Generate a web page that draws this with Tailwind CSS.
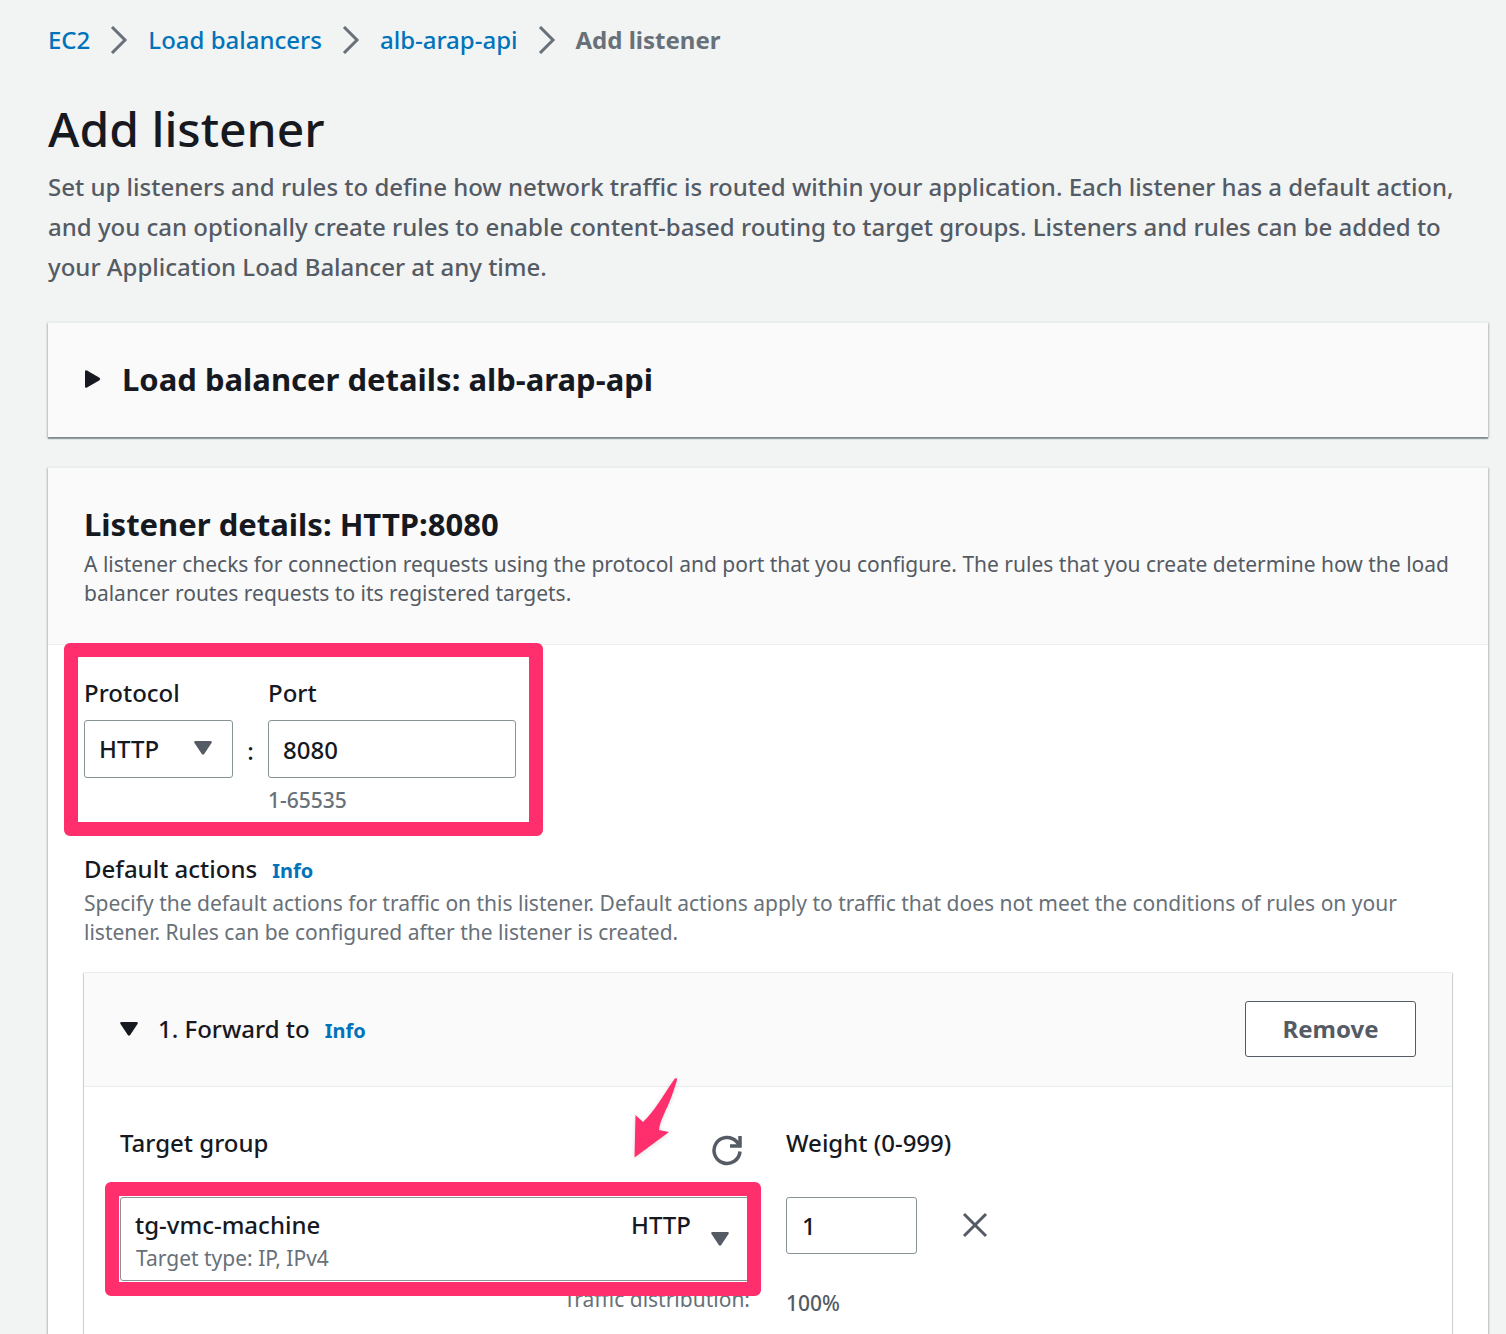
<!DOCTYPE html>
<html lang="en">
<head>
    <meta charset="UTF-8">
    <meta name="viewport" content="width=device-width, initial-scale=1.0">
    <title>Add listener | EC2</title>
    <script src="https://cdn.jsdelivr.net/npm/@tailwindcss/browser@4"></script>
</head>
<body class="bg-[#f2f3f3] font-['Noto_Sans',sans-serif] text-[#16191f] text-[24px] leading-[36px] font-medium">
    <div class="min-h-screen pl-12 pr-[18px] pt-[22px]">

        <!-- Breadcrumbs -->
        <nav aria-label="Breadcrumbs">
            <ol class="flex items-center gap-5 text-[#0073bb]">
                <li><a href="#">EC2</a></li>
                <li aria-hidden="true"><svg class="w-[18px] h-7" viewBox="0 0 18 28" fill="none" stroke="#687078" stroke-width="3"><path d="M2 1l13 13L2 27"/></svg></li>
                <li><a href="#">Load balancers</a></li>
                <li aria-hidden="true"><svg class="w-[18px] h-7" viewBox="0 0 18 28" fill="none" stroke="#687078" stroke-width="3"><path d="M2 1l13 13L2 27"/></svg></li>
                <li><a href="#">alb-arap-api</a></li>
                <li aria-hidden="true"><svg class="w-[18px] h-7" viewBox="0 0 18 28" fill="none" stroke="#687078" stroke-width="3"><path d="M2 1l13 13L2 27"/></svg></li>
                <li class="font-bold text-[#687078]" aria-current="page">Add listener</li>
            </ol>
        </nav>

        <!-- Page header -->
        <header class="mt-[39px]">
            <h1 class="text-[48px] leading-[64px]">Add listener</h1>
            <p class="mt-[6px] pr-5 leading-[40px] text-[#545b64]">Set up listeners and rules to define how network traffic is routed within your application. Each listener has a default action, and you can optionally create rules to enable content-based routing to target groups. Listeners and rules can be added to your Application Load Balancer at any time.</p>
        </header>

        <main class="mt-[35px] space-y-[30px]">
            <!-- Load balancer details -->
            <section class="bg-[#fafafa] px-9 pt-[35px] pb-[37px] border-t border-[#eaeded] shadow-[0_2px_1px_0_rgba(0,28,36,0.3),1px_1px_2px_0_rgba(0,28,36,0.2),-1px_1px_2px_0_rgba(0,28,36,0.2)]">
                <button type="button" class="flex items-center gap-5" aria-expanded="false">
                    <svg class="w-[18px] h-5" viewBox="0 0 18 20" fill="#16191f"><path d="M1 2.500Q1 .5 3 1.500L15.500 8.800Q17 10 15.500 11.200L3 18.500Q1 19.500 1 17.500z"/></svg>
                    <span class="text-[31px] leading-[42px] font-bold">Load balancer details: alb-arap-api</span>
                </button>
            </section>

            <!-- Listener details -->
            <section class="bg-white border-t border-[#eaeded] shadow-[0_2px_1px_0_rgba(0,28,36,0.3),1px_1px_2px_0_rgba(0,28,36,0.2),-1px_1px_2px_0_rgba(0,28,36,0.2)]">
                <header class="bg-[#fafafa] border-b border-[#eaeded] px-9 pt-8 pb-9">
                    <h2 class="text-[31px] leading-[48px] font-bold">Listener details: HTTP:8080</h2>
                    <p class="mt-[2px] text-[21px] leading-[29px] font-normal text-[#545b64]">A listener checks for connection requests using the protocol and port that you configure. The rules that you create determine how the load balancer routes requests to its registered targets.</p>
                </header>

                <div class="px-9 pt-[30px] pb-9">
                    <div class="relative flex w-fit">
                        <div>
                            <label for="protocol" class="block">Protocol</label>
                            <div class="relative mt-[9px]">
                                <select id="protocol" class="appearance-none w-[149px] h-[58px] px-[14px] bg-white border border-[#879596] rounded-[3px]">
                                    <option>HTTP</option>
                                    <option>HTTPS</option>
                                </select>
                                <svg class="absolute right-5 top-5 w-5 h-4 pointer-events-none" viewBox="0 0 20 16" fill="#545b64"><path d="M2.500 1h15Q19.500 1 18.500 3L11.200 14Q10 15.500 8.800 14L1.500 3Q.5 1 2.500 1z"/></svg>
                            </div>
                        </div>
                        <span class="w-[35px] mt-[58px] text-center">:</span>
                        <div>
                            <label for="port" class="block">Port</label>
                            <input id="port" type="text" value="8080" aria-describedby="port-hint" class="block mt-[9px] w-[248px] h-[58px] px-[14px] bg-white border border-[#879596] rounded-[3px]">
                            <p id="port-hint" class="mt-2 text-[21px] leading-[29px] text-[#687078]">1-65535</p>
                        </div>
                        <div class="absolute -left-5 -right-[27px] -top-8 -bottom-[21px] border-14 border-[#ff2e6c] rounded-md pointer-events-none"></div>
                    </div>

                    <div class="mt-9">
                        <h3 class="flex items-baseline gap-[15px]">Default actions <a href="#" class="text-[20px] font-bold text-[#0073bb]">Info</a></h3>
                        <p class="text-[21px] leading-[29px] font-normal text-[#687078]">Specify the default actions for traffic on this listener. Default actions apply to traffic that does not meet the conditions of rules on your listener. Rules can be configured after the listener is created.</p>
                    </div>

                    <!-- Forward action -->
                    <section class="mt-[25px] bg-white border-t border-[#eaeded] shadow-[0_2px_1px_0_rgba(0,28,36,0.3),1px_1px_1px_0_rgba(0,28,36,0.15),-1px_1px_1px_0_rgba(0,28,36,0.15)]">
                        <header class="flex items-center justify-between bg-[#fafafa] border-b border-[#eaeded] px-9 pt-7 pb-[29px]">
                            <div class="flex items-center gap-[15px]">
                                <button type="button" class="flex items-center gap-5" aria-expanded="true">
                                    <svg class="w-[18px] h-4" viewBox="1 0 18 16" fill="#16191f"><path d="M2.500 1h15Q19.500 1 18.500 3L11.200 14Q10 15.500 8.800 14L1.500 3Q.5 1 2.500 1z"/></svg>
                                    <span>1. Forward to</span>
                                </button>
                                <a href="#" class="pt-1 text-[20px] font-bold text-[#0073bb]">Info</a>
                            </div>
                            <button type="button" class="w-[171px] h-14 bg-white border border-[#545b64] rounded-[3px] font-bold text-[#545b64]">Remove</button>
                        </header>

                        <div class="flex gap-9 px-9 pt-[38px] pb-9">
                            <div class="w-[630px]">
                                <div class="flex items-start justify-between">
                                    <label for="target-group">Target group</label>
                                    <button type="button" aria-label="Refresh target groups" class="mt-[10px] mr-[6px]">
                                        <svg class="w-8 h-8" viewBox="0 0 32 32" fill="none" stroke="#545b64" stroke-width="3.500"><path d="M28 16.500A13 13 0 1 1 24.500 6.500L27.500 10"/><path d="M28 1v10H18"/></svg>
                                    </button>
                                </div>
                                <div class="relative mt-[30px]">
                                    <select id="target-group" class="appearance-none block w-full h-[84px] px-[14px] pb-7 bg-white border border-[#879596] rounded-[3px]">
                                        <option>tg-vmc-machine</option>
                                    </select>
                                    <span class="absolute left-4 bottom-2 text-[21px] leading-[29px] font-normal text-[#687078] pointer-events-none">Target type: IP, IPv4</span>
                                    <span class="absolute right-[59px] top-[10px] pointer-events-none">HTTP</span>
                                    <svg class="absolute right-5 top-[34px] w-5 h-4 pointer-events-none" viewBox="0 0 20 16" fill="#545b64"><path d="M2.500 1h15Q19.500 1 18.500 3L11.200 14Q10 15.500 8.800 14L1.500 3Q.5 1 2.500 1z"/></svg>
                                    <div class="absolute -left-[15px] -right-[11px] -inset-y-[15px] z-10 border-14 border-[#ff2e6c] rounded-md pointer-events-none"></div>
                                    <svg class="absolute left-[510px] -top-[122px] w-12 h-[86px] drop-shadow-sm pointer-events-none" viewBox="0 0 48 86" fill="#ff2e6c"><path d="M44.500 4Q47 1.500 47 5Q46 9 41 23C37 34 30 45 29 55L39 57L4.500 82.500L5.500 40L13 47C24 37 32 22 44.500 4z"/></svg>
                                </div>
                                <p class="mt-1 text-right text-[21px] leading-[29px] font-normal text-[#687078]">Traffic distribution:</p>
                            </div>
                            <div>
                                <label for="weight" class="block">Weight (0-999)</label>
                                <div class="mt-9 flex items-center gap-[45px]">
                                    <input id="weight" type="text" value="1" class="w-[131px] h-[57px] px-[15px] bg-white border border-[#879596] rounded-[3px]">
                                    <button type="button" aria-label="Remove target group" class="pb-[2px]">
                                        <svg class="w-[26px] h-[26px]" viewBox="0 0 26 26" fill="none" stroke="#545b64" stroke-width="3"><path d="M2 2l22 22M24 2L2 24"/></svg>
                                    </button>
                                </div>
                                <p class="mt-[35px] text-[21px] leading-[29px] text-[#545b64]">100%</p>
                            </div>
                        </div>
                    </section>
                </div>
            </section>
        </main>
    </div>
</body>
</html>
